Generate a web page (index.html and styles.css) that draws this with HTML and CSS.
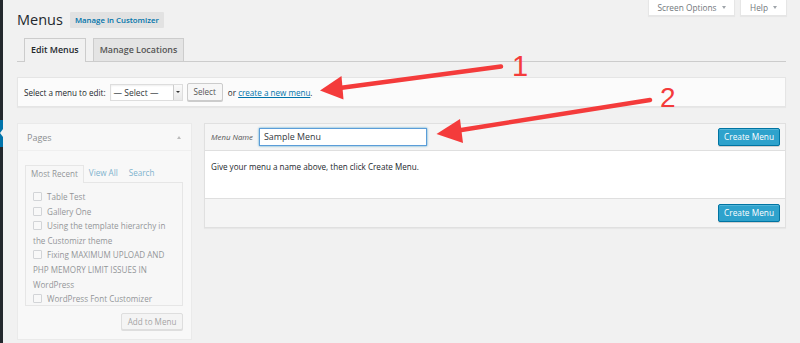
FILE: index.html
```html
<!DOCTYPE html>
<html lang="en">
<head>
<meta charset="utf-8">
<title>Menus</title>
<link rel="stylesheet" href="styles.css">
</head>
<body>
<div class="page">
  <div class="admin-strip">
    <div class="strip-current"></div>
  </div>
  <div class="wrap">
    <div class="top">
      <div class="title-row">
        <h1>Menus</h1>
        <a class="title-action">Manage in Customizer</a>
      </div>
      <div class="screen-links">
        <span class="screen-btn opts">Screen Options<span class="caret"></span></span>
        <span class="screen-btn help">Help<span class="caret"></span></span>
      </div>
    </div>

    <div class="nav-tabs">
      <a class="nav-tab active">Edit Menus</a>
      <a class="nav-tab">Manage Locations</a>
    </div>

    <div class="manage-menus">
      <span class="select-label">Select a menu to edit:</span>
      <span class="fake-select"><span class="sel-text">&mdash; Select &mdash;</span><span class="sel-arrow"><span class="sel-tri"></span></span></span>
      <span class="btn">Select</span>
      <span class="or">or <a class="link">create a new menu</a>.</span>
    </div>

    <div class="columns">
      <div class="side">
        <div class="side-head"><span>Pages</span><span class="up"></span></div>
        <div class="side-body">
          <div class="inner-tabs">
            <span class="itab active">Most Recent</span>
            <span class="itab link-tab">View All</span>
            <span class="itab link-tab search">Search</span>
          </div>
          <div class="list-panel">
            <div class="item"><span class="cb"></span>Table Test</div>
            <div class="item"><span class="cb"></span>Gallery One</div>
            <div class="item"><span class="cb"></span>Using the template hierarchy in the Customizr theme</div>
            <div class="item"><span class="cb"></span>Fixing MAXIMUM UPLOAD AND PHP MEMORY LIMIT ISSUES IN WordPress</div>
            <div class="item"><span class="cb"></span>WordPress Font Customizer</div>
          </div>
          <div class="add-row"><span class="btn add-btn">Add to Menu</span></div>
        </div>
      </div>

      <div class="main-panel">
        <div class="panel-head">
          <span class="name-label">Menu Name</span>
          <span class="name-input">Sample Menu</span>
          <span class="btn-primary">Create Menu</span>
        </div>
        <div class="panel-body">Give your menu a name above, then click Create Menu.</div>
        <div class="panel-foot">
          <span class="btn-primary">Create Menu</span>
        </div>
      </div>
    </div>
  </div>

  <svg class="annotations" width="800" height="343" viewBox="0 0 800 343" xmlns="http://www.w3.org/2000/svg">
    <g fill="#f43b3b" stroke="none">
      <line x1="501" y1="66.5" x2="336" y2="88.5" stroke="#f43b3b" stroke-width="4.5" stroke-linecap="round"/>
      <polygon points="320,90.5 341.5,76 343.5,99.5"/>
      <line x1="650" y1="100" x2="455" y2="131" stroke="#f43b3b" stroke-width="4.5" stroke-linecap="round"/>
      <polygon points="436.5,134 460,119 463,143"/>
      <text x="512" y="76" font-family="Liberation Sans, Arial, sans-serif" font-size="29">1</text>
      <text x="660" y="107" font-family="Liberation Sans, Arial, sans-serif" font-size="28">2</text>
    </g>
  </svg>
</div>
</body>
</html>
```

FILE: styles.css
```css
* { box-sizing: border-box; }

html, body {
  margin: 0;
  padding: 0;
  background: #f1f1f1;
}

body {
  font-family: "Open Sans", "Noto Sans", sans-serif;
  font-size: 8.1px;
  color: #23282d;
}

.page {
  position: relative;
  width: 800px;
  height: 343px;
  overflow: hidden;
  display: flex;
}

/* dark admin menu edge */
.admin-strip {
  width: 3px;
  flex: 0 0 3px;
  background: #23282d;
  padding-top: 120px;
}

.strip-current {
  position: relative;
  height: 27px;
  background: #0073aa;
}

.strip-current::after {
  content: "";
  position: absolute;
  right: 0;
  top: 9px;
  border-style: solid;
  border-width: 4px 3px 4px 0;
  border-color: transparent #f1f1f1 transparent transparent;
}

.wrap {
  flex: 1;
  padding: 0 14px 0 14px;
}

/* header */
.top {
  display: flex;
  justify-content: space-between;
  align-items: flex-start;
  height: 38px;
}

.title-row {
  display: flex;
  align-items: center;
  margin-top: 12px;
  height: 16px;
}

h1 {
  margin: 0;
  font-size: 14.5px;
  font-weight: 400;
  line-height: 16px;
  color: #23282d;
}

.title-action {
  margin-left: 7px;
  height: 16px;
  line-height: 16px;
  padding: 0 5px;
  background: #e2e2e2;
  color: #0073aa;
  font-size: 7.8px;
  font-weight: 600;
  border-radius: 1px;
}

.screen-links {
  display: flex;
  gap: 5px;
  margin-right: -1px;
}

.screen-btn {
  display: flex;
  align-items: center;
  justify-content: center;
  white-space: nowrap;
  height: 16px;
  background: #fff;
  color: #72777c;
  font-size: 8.3px;
  border: 1px solid #e6e6e6;
  border-top: 0;
  box-shadow: 0 1px 1px rgba(0,0,0,.04);
  padding-bottom: 1px;
}

.screen-btn.opts { width: 87px; }
.screen-btn.help { width: 47px; }

.caret {
  display: inline-block;
  margin-left: 5px;
  border-style: solid;
  border-width: 3px 2.5px 0 2.5px;
  border-color: #a0a5aa transparent transparent transparent;
}

/* nav tabs */
.nav-tabs {
  display: flex;
  align-items: flex-end;
  gap: 7px;
  height: 24px;
  padding-left: 7px;
  border-bottom: 1px solid #ccc;
}

.nav-tab {
  height: 23px;
  line-height: 22px;
  padding: 0 6px;
  border: 1px solid #ccc;
  border-bottom: 0;
  background: #e4e4e4;
  color: #555;
  font-size: 8.9px;
  font-weight: 600;
}

.nav-tab.active {
  background: #f1f1f1;
  color: #23282d;
  height: 24px;
  margin-bottom: -1px;
}

/* manage menus bar */
.manage-menus {
  margin-top: 15px;
  height: 30px;
  display: flex;
  align-items: center;
  padding: 0 6px;
  background: #fbfbfb;
  border: 1px solid #e5e5e5;
  box-shadow: 0 1px 1px rgba(0,0,0,.04);
  color: #23282d;
}

.select-label { margin-right: 4px; }

.fake-select {
  display: flex;
  width: 73px;
  height: 17px;
  background: #fff;
  border: 1px solid #ddd;
  box-shadow: inset 0 1px 2px rgba(0,0,0,.07);
  font-size: 8.5px;
  color: #32373c;
}

.sel-text {
  flex: 1;
  line-height: 15px;
  padding-left: 3px;
}

.sel-arrow {
  width: 9px;
  border-left: 1px solid #ccc;
  background: linear-gradient(#fafafa, #e9e9e9);
  display: flex;
  align-items: center;
  justify-content: center;
}

.sel-tri {
  border-style: solid;
  border-width: 2px 2px 0 2px;
  border-color: #333 transparent transparent transparent;
}

.btn {
  display: inline-block;
  height: 18px;
  line-height: 16px;
  padding: 0 6px;
  border: 1px solid #ccc;
  background: #f7f7f7;
  box-shadow: 0 1px 0 #ccc;
  border-radius: 2px;
  color: #555;
  font-size: 8.1px;
}

.manage-menus .btn { margin-left: 4px; }

.or { margin-left: 5px; }

.link {
  color: #0073aa;
  text-decoration: underline;
}

/* columns */
.columns {
  margin-top: 16px;
  display: flex;
  gap: 12px;
  align-items: flex-start;
}

.side {
  width: 175px;
  flex: 0 0 175px;
  background: #fff;
  border: 1px solid #e5e5e5;
  opacity: .5;
}

.side-head {
  height: 27px;
  display: flex;
  align-items: center;
  justify-content: space-between;
  padding: 0 10px 0 9px;
  border-bottom: 1px solid #eee;
  font-size: 9px;
  color: #23282d;
}

.up {
  border-style: solid;
  border-width: 0 2.5px 3px 2.5px;
  border-color: transparent transparent #888 transparent;
}

.side-body {
  padding: 14px 8px 9px 7px;
}

.inner-tabs {
  display: flex;
  height: 17px;
  gap: 0;
}

.itab {
  height: 17px;
  line-height: 16px;
  padding: 0 5px;
  color: #32373c;
}

.itab.active {
  border: 1px solid #ddd;
  border-bottom: 0;
  background: #fdfdfd;
  margin-bottom: -1px;
  height: 18px;
  position: relative;
}

.link-tab { color: #0073aa; }
.search { margin-left: 1px; }

.list-panel {
  height: 124px;
  overflow: hidden;
  border: 1px solid #ddd;
  background: #fdfdfd;
  padding: 7px 8px 0 7px;
  line-height: 14.6px;
  color: #32373c;
}

.cb {
  display: inline-block;
  width: 9px;
  height: 9px;
  border: 1px solid #b4b9be;
  border-radius: 1px;
  background: #fff;
  margin-right: 5px;
  vertical-align: -1px;
}

.add-row {
  display: flex;
  justify-content: flex-end;
  margin-top: 7px;
}

.add-btn {
  width: 62px;
  height: 17px;
  line-height: 15px;
  text-align: center;
  padding: 0;
}

/* main panel */
.main-panel {
  flex: 1;
  background: #fff;
  border: 1px solid #e0e0e0;
  box-shadow: 0 1px 1px rgba(0,0,0,.04);
}

.panel-head {
  height: 27px;
  display: flex;
  align-items: center;
  padding: 0 5px 0 6px;
  background: #f5f5f5;
  border-bottom: 1px solid #dfdfdf;
}

.name-label {
  font-style: italic;
  font-size: 7.8px;
  color: #555;
  margin-right: 6px;
}

.name-input {
  width: 168px;
  height: 18px;
  line-height: 16px;
  padding: 0 4px;
  background: #fff;
  border: 1px solid #5b9dd9;
  box-shadow: 0 0 2px rgba(30,140,190,.8);
  font-size: 8.9px;
  color: #32373c;
}

.btn-primary {
  margin-left: auto;
  width: 62px;
  height: 18px;
  line-height: 16px;
  text-align: center;
  background: #2ea2cc;
  border: 1px solid #0074a2;
  border-radius: 2px;
  box-shadow: inset 0 1px 0 rgba(120,200,230,.5), 0 1px 0 rgba(0,0,0,.15);
  color: #fff;
  font-size: 8.3px;
}

.panel-body {
  height: 47px;
  padding: 10px 6px 0 6px;
  line-height: 12px;
  background: #fff;
}

.panel-foot {
  height: 29px;
  display: flex;
  align-items: center;
  padding: 0 5px 1px 6px;
  background: #f5f5f5;
  border-top: 1px solid #dfdfdf;
}

/* annotation overlay */
.annotations {
  position: absolute;
  left: 0;
  top: 0;
  pointer-events: none;
}
```
